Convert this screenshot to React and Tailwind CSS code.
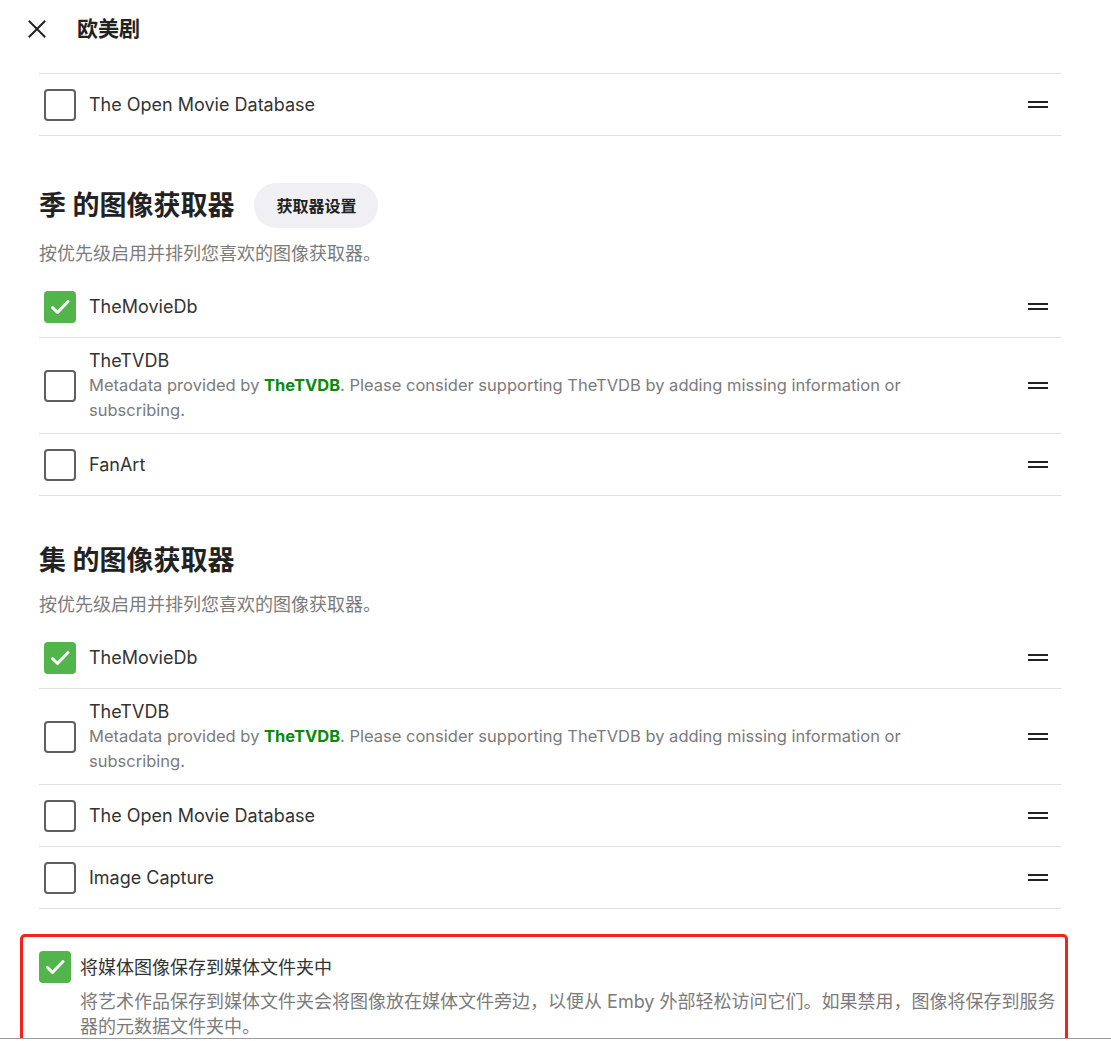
import React from "react";

const FONT = { fontFamily: 'Inter, "Noto Sans CJK SC", "Noto Sans", sans-serif' };

const seasonFetchers = [
  { id: "tmdb", name: "TheMovieDb", checked: true },
  { id: "tvdb", name: "TheTVDB", checked: false, tvdb: true },
  { id: "fanart", name: "FanArt", checked: false },
];

const episodeFetchers = [
  { id: "tmdb", name: "TheMovieDb", checked: true },
  { id: "tvdb", name: "TheTVDB", checked: false, tvdb: true },
  { id: "omdb", name: "The Open Movie Database", checked: false },
  { id: "capture", name: "Image Capture", checked: false },
];

const CheckBox = ({ checked }) =>
  checked ? (
    <div className="w-8 h-8 shrink-0 rounded-[4px] bg-[#52b54b] flex items-center justify-center">
      <svg width="24" height="24" viewBox="0 0 24 24" fill="none" stroke="white" strokeWidth="3" strokeLinecap="round" strokeLinejoin="round">
        <path d="M4.5 12.5l5 5L20 6.5" />
      </svg>
    </div>
  ) : (
    <div className="w-8 h-8 shrink-0 rounded-[4px] border-2 border-[#5f5f5f]" />
  );

const DragHandle = () => (
  <div className="w-5 flex flex-col gap-[3px] mr-[13px] shrink-0">
    <div className="h-[2px] bg-[#222]" />
    <div className="h-[2px] bg-[#222]" />
  </div>
);

const FetcherRow = ({ item }) => (
  <div className={`flex items-center border-b border-[#e0e0e0] pl-[5px] ${item.tvdb ? "min-h-[96px] py-[10px]" : "h-[62px]"}`}>
    <CheckBox checked={item.checked} />
    <div className="flex-1 ml-[13px] pr-[70px]">
      <div className="text-[18px] text-[#333] leading-[25px]">{item.name}</div>
      {item.tvdb && (
        <div className="text-[16.5px] text-[#7b7b7b] leading-[25px]">
          Metadata provided by <span className="font-bold text-[#0a8a0a]">TheTVDB</span>. Please consider supporting TheTVDB by adding missing information or subscribing.
        </div>
      )}
    </div>
    <DragHandle />
  </div>
);

const Section = ({ title, showButton, items }) => (
  <div className="mt-[47px]">
    <div className="flex items-center gap-[20px]">
      <h2 className="text-[27px] leading-[36px] font-bold text-[#222]">{title}</h2>
      {showButton && (
        <button className="h-[45px] px-[22px] rounded-full bg-[#efeff4] text-[16px] font-bold text-[#222]">
          获取器设置
        </button>
      )}
    </div>
    <p className="text-[18px] text-[#7b7b7b] mt-[14px] leading-[24px]">按优先级启用并排列您喜欢的图像获取器。</p>
    <div className="mt-[10px]">
      {items.map((it) => (
        <FetcherRow key={it.id} item={it} />
      ))}
    </div>
  </div>
);

export default function App() {
  return (
    <div className="w-[1111px] h-[1041px] bg-white flex flex-col overflow-hidden" style={FONT}>
      <div className="flex-1 overflow-hidden">
        {/* header */}
        <div className="flex items-center h-[58px] pl-[27px]">
          <svg width="20" height="20" viewBox="0 0 20 20" stroke="#222" strokeWidth="2" strokeLinecap="square">
            <path d="M2.5 2.5L17.5 17.5M17.5 2.5L2.5 17.5" />
          </svg>
          <h1 className="ml-[30px] text-[21px] font-bold text-[#222]">欧美剧</h1>
        </div>

        <div className="pl-[39px] w-[1061px]">
          <div className="mt-[15px] border-t border-[#e0e0e0]">
            <FetcherRow item={{ id: "omdb0", name: "The Open Movie Database", checked: false }} />
          </div>

          <Section title="季 的图像获取器" showButton items={seasonFetchers} />
          <Section title="集 的图像获取器" items={episodeFetchers} />

          <div className="mt-[25px] ml-[-19px] mr-[-7px] border-[3px] border-[#f5211b] rounded-[5px] pl-[16px] pr-[4px] pt-[14px] pb-[10px]">
            <div className="flex items-center">
              <CheckBox checked />
              <span className="ml-[9px] text-[18px] text-[#333]">将媒体图像保存到媒体文件夹中</span>
            </div>
            <p className="ml-[41px] mt-[6px] text-[18px] leading-[25px] text-[#7b7b7b]">
              将艺术作品保存到媒体文件夹会将图像放在媒体文件旁边，以便从 Emby 外部轻松访问它们。如果禁用，图像将保存到服务器的元数据文件夹中。
            </p>
          </div>
        </div>
      </div>
      <div className="h-[3px] border-t border-[#9a9a9a] bg-white" />
    </div>
  );
}
